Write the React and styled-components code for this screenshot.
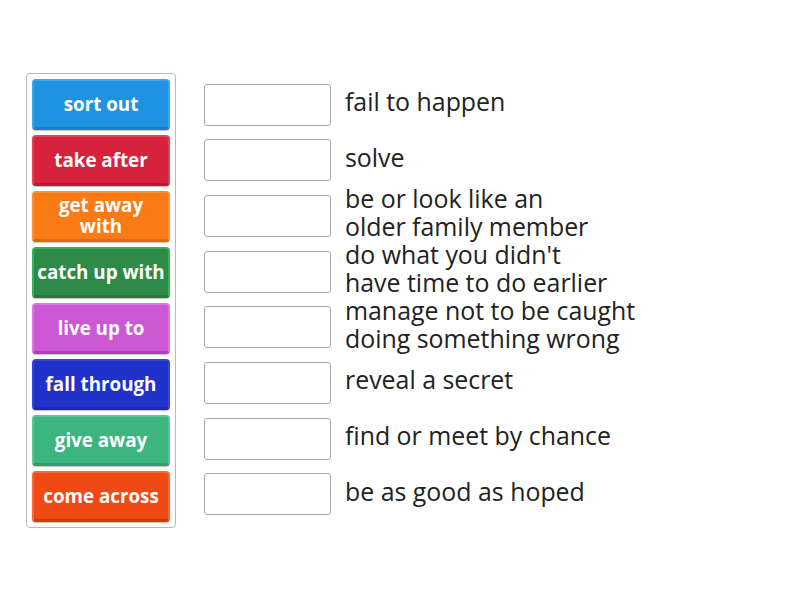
import React from 'react';
import styled, {createGlobalStyle} from 'styled-components';

const GlobalStyle = createGlobalStyle`
  body {
    margin: 0;
    background: #fff;
    font-family: "Open Sans", "Liberation Sans", sans-serif;
  }
`;

const Page = styled.div`
  display: flex;
  align-items: flex-start;
  padding: 73px 0 0 26px;
  gap: 28px;
`;

const Tray = styled.div`
  display: flex;
  flex-direction: column;
  gap: 5px;
  padding: 5px;
  border: 1px solid #b9b9b9;
  border-radius: 4px;
  background: #fff;
`;

const Tile = styled.div`
  box-sizing: border-box;
  width: 138px;
  height: 51px;
  display: flex;
  align-items: center;
  justify-content: center;
  text-align: center;
  color: #fff;
  font-weight: 700;
  font-size: 18.8px;
  line-height: 21px;
  border-radius: 4px;
  background: ${p => p.$color};
  border: 2px solid ${p => p.$light};
  border-bottom: 3px solid ${p => p.$dark};
  box-shadow: 0 1px 1px rgba(0, 0, 0, 0.25);
  padding: 0 3px;
`;

const Targets = styled.div`
  display: flex;
  flex-direction: column;
  gap: 4.7px;
  padding-top: 6px;
`;

const Row = styled.div`
  height: 51px;
  display: flex;
  align-items: center;
  gap: 14px;
`;

const Slot = styled.div`
  box-sizing: border-box;
  width: 127px;
  height: 42px;
  border: 1px solid #a9a9a9;
  border-radius: 3px;
  background: #fff;
  flex-shrink: 0;
`;

const Definition = styled.div`
  font-size: 24.9px;
  line-height: 28px;
  color: #222;
  white-space: pre-line;
  margin-bottom: 7px;
`;

const tiles = [
  {text: 'sort out', color: '#1f93e2', light: '#3aa6ee', dark: '#1a7fc6'},
  {text: 'take after', color: '#d7223c', light: '#e04457', dark: '#b81b32'},
  {text: 'get away with', color: '#fa7a16', light: '#fd8f35', dark: '#e06a10'},
  {text: 'catch up with', color: '#2d8a47', light: '#34b55a', dark: '#257a3d'},
  {text: 'live up to', color: '#cc58d4', light: '#d978de', dark: '#b23fbb'},
  {text: 'fall through', color: '#2032c9', light: '#3547d6', dark: '#1a29ad'},
  {text: 'give away', color: '#3db57e', light: '#5ac595', dark: '#2f9d6b'},
  {text: 'come across', color: '#f04a14', light: '#fa6a38', dark: '#cf3c0e'},
];

const definitions = [
  'fail to happen',
  'solve',
  'be or look like an\nolder family member',
  "do what you didn't\nhave time to do earlier",
  'manage not to be caught\ndoing something wrong',
  'reveal a secret',
  'find or meet by chance',
  'be as good as hoped',
];

export default function App() {
  return (
    <>
      <GlobalStyle />
      <Page>
        <Tray>
          {tiles.map(t => (
            <Tile key={t.text} $color={t.color} $light={t.light} $dark={t.dark}>
              {t.text}
            </Tile>
          ))}
        </Tray>
        <Targets>
          {definitions.map(d => (
            <Row key={d}>
              <Slot />
              <Definition>{d}</Definition>
            </Row>
          ))}
        </Targets>
      </Page>
    </>
  );
}
